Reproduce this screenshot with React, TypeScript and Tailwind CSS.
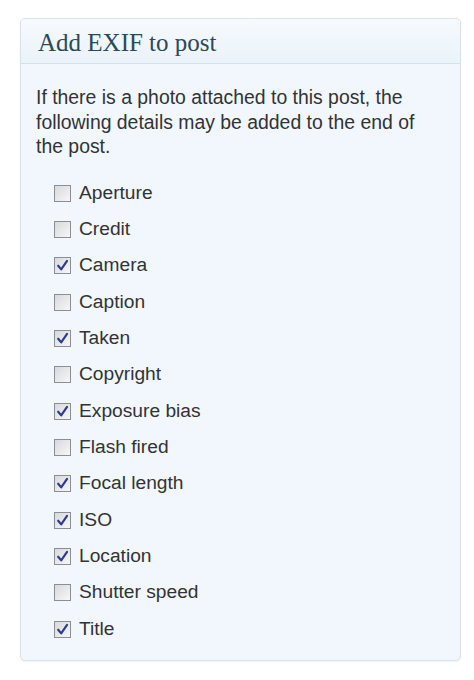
const fields: Array<{ label: string; checked: boolean }> = [
  { label: 'Aperture', checked: false },
  { label: 'Credit', checked: false },
  { label: 'Camera', checked: true },
  { label: 'Caption', checked: false },
  { label: 'Taken', checked: true },
  { label: 'Copyright', checked: false },
  { label: 'Exposure bias', checked: true },
  { label: 'Flash fired', checked: false },
  { label: 'Focal length', checked: true },
  { label: 'ISO', checked: true },
  { label: 'Location', checked: true },
  { label: 'Shutter speed', checked: false },
  { label: 'Title', checked: true },
]

function Box({ checked }: { checked: boolean }) {
  return (
    <span className="flex h-[17px] w-[17px] shrink-0 items-center justify-center border border-[#8a8f96] bg-gradient-to-br from-[#d8d9dc] to-[#f7f7f8]">
      {checked && (
        <svg viewBox="0 0 12 12" className="h-[13px] w-[13px]">
          <path d="M2 6.2 L4.8 9.6 L10.2 1.8" fill="none" stroke="#2f3b8f" strokeWidth="2" strokeLinecap="round" strokeLinejoin="round" />
        </svg>
      )}
    </span>
  )
}

export default function App() {
  return (
    <div className="min-h-[680px] bg-white px-[20px] pt-[18px]" style={{ fontFamily: '"Liberation Sans", Arial, sans-serif' }}>
      <div className="w-[441px] overflow-hidden rounded-[5px] border border-[#d6e3ea] bg-[#f1f7fd] shadow-[0_1px_2px_rgba(0,0,0,0.06)]">
        <div className="flex h-[45px] items-center border-b border-[#d3e1e8] bg-gradient-to-b from-[#f6fafd] to-[#eaf3fa] px-[17px]">
          <h2 className="pt-[2px] text-[25px] leading-none text-[#2b4a58]" style={{ fontFamily: '"Liberation Serif", Georgia, serif' }}>
            Add EXIF to post
          </h2>
        </div>
        <div className="pt-[21px] pr-[18px] pb-[13px] pl-[15px]">
          <p className="text-[19.4px] leading-[24.5px] text-[#333333]">
            If there is a photo attached to this post, the following details may be added to the end of the post.
          </p>
          <ul className="mt-[16.5px] pl-[18px]">
            {fields.map((f) => (
              <li key={f.label} className="flex h-[36.33px] items-center gap-[8px] text-[19.2px] text-[#333333]">
                <Box checked={f.checked} />
                <span>{f.label}</span>
              </li>
            ))}
          </ul>
        </div>
      </div>
    </div>
  )
}
